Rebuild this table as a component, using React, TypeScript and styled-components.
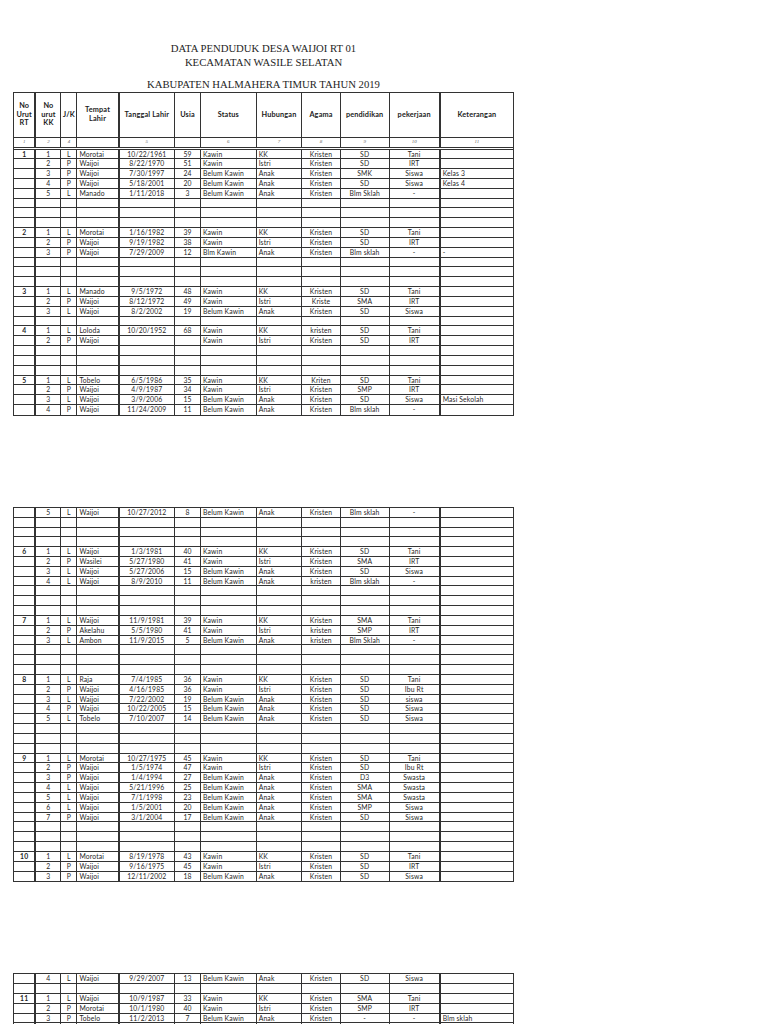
import React from "react";
import styled, { createGlobalStyle } from "styled-components";

const GlobalStyle = createGlobalStyle`
  html, body { margin: 0; padding: 0; background: #ffffff; }
  body { font-family: Lato, "Liberation Sans", sans-serif; color: #222; }
`;

const COLS = "22.4px 25px 16px 42.3px 55.3px 26px 55.7px 45.7px 38.3px 49px 51px 1fr";
const LINE = "#333333";

type Align = "left" | "center";
const ALIGN: Align[] = ["center", "center", "center", "left", "center", "center", "left", "left", "center", "center", "center", "left"];
const THICK = [true, false, false, true, false, false, false, false, false, false, true, false];

const Page = styled.div`
  width: 501px;
  padding: 41px 0 0 13px;
`;

const TitleLine = styled.div<{ $gap?: number }>`
  font-family: "Liberation Serif", "DejaVu Serif", serif;
  font-size: 10.7px;
  line-height: 14px;
  text-align: center;
  color: #1e1e1e;
  margin-top: ${(p) => p.$gap ?? 0}px;
`;

const Sheet = styled.div<{ $top: number }>`
  margin-top: ${(p) => p.$top}px;
  border: 1px solid ${LINE};
  box-sizing: border-box;
  width: 501px;
`;

const Row = styled.div`
  display: grid;
  grid-template-columns: ${COLS};
  height: 9.83px;
  box-sizing: border-box;
  border-bottom: 1px solid ${LINE};
  &:last-child { border-bottom: none; }
`;

const HeadRow = styled(Row)`
  height: 45px;
`;

const NumRow = styled(Row)`
  height: 11.5px;
  border-bottom: 3px double ${LINE};
`;

const Cell = styled.div<{ $align: Align; $thick: boolean; $bold?: boolean }>`
  box-sizing: border-box;
  border-right: ${(p) => (p.$thick ? 2 : 1)}px solid ${LINE};
  &:last-child { border-right: none; }
  padding: 0 2px;
  font-size: 6.8px;
  letter-spacing: 0.15px;
  line-height: 8.8px;
  white-space: nowrap;
  overflow: hidden;
  text-align: ${(p) => p.$align};
  font-weight: ${(p) => (p.$bold ? 700 : 400)};
  color: #1f1f1f;
`;

const HeadCell = styled.div<{ $thick: boolean }>`
  box-sizing: border-box;
  border-right: ${(p) => (p.$thick ? 2 : 1)}px solid ${LINE};
  &:last-child { border-right: none; }
  display: flex;
  align-items: center;
  justify-content: center;
  text-align: center;
  font-weight: 700;
  font-size: 7.3px;
  letter-spacing: 0.15px;
  line-height: 8.6px;
  color: #1c1c1c;
  white-space: pre-line;
  padding: 0 1px;
`;

const NumCell = styled.div<{ $thick: boolean }>`
  box-sizing: border-box;
  border-right: ${(p) => (p.$thick ? 2 : 1)}px solid ${LINE};
  &:last-child { border-right: none; }
  font-family: "Liberation Serif", serif;
  font-style: italic;
  font-size: 5px;
  line-height: 8px;
  text-align: center;
  color: #666;
`;

const HEAD = ["No\nUrut\nRT", "No\nurut\nKK", "J/K", "Tempat\nLahir", "Tanggal Lahir", "Usia", "Status", "Hubungan", "Agama", "pendidikan", "pekerjaan", "Keterangan"];
const NUMS = ["1", "2", "4", "", "5", "", "6", "7", "8", "9", "10", "11"];

type R = string[];
const E: R = [];
const empties = (n: number): R[] => Array.from({ length: n }, () => E);

const page1: R[] = [
  ["1", "1", "L", "Morotai", "10/22/1961", "59", "Kawin", "KK", "Kristen", "SD", "Tani", ""],
  ["", "2", "P", "Waijoi", "8/22/1970", "51", "Kawin", "Istri", "Kristen", "SD", "IRT", ""],
  ["", "3", "P", "Waijoi", "7/30/1997", "24", "Belum Kawin", "Anak", "Kristen", "SMK", "Siswa", "Kelas 3"],
  ["", "4", "P", "Waijoi", "5/18/2001", "20", "Belum Kawin", "Anak", "Kristen", "SD", "Siswa", "Kelas 4"],
  ["", "5", "L", "Manado", "1/11/2018", "3", "Belum Kawin", "Anak", "Kristen", "Blm Sklah", "-", ""],
  ...empties(3),
  ["2", "1", "L", "Morotai", "1/16/1982", "39", "Kawin", "KK", "Kristen", "SD", "Tani", ""],
  ["", "2", "P", "Waijoi", "9/19/1982", "38", "Kawin", "Istri", "Kristen", "SD", "IRT", ""],
  ["", "3", "P", "Waijoi", "7/29/2009", "12", "Blm Kawin", "Anak", "Kristen", "Blm sklah", "-", "-"],
  ...empties(3),
  ["3", "1", "L", "Manado", "9/5/1972", "48", "Kawin", "KK", "Kristen", "SD", "Tani", ""],
  ["", "2", "P", "Waijoi", "8/12/1972", "49", "Kawin", "Istri", "Kriste", "SMA", "IRT", ""],
  ["", "3", "L", "Waijoi", "8/2/2002", "19", "Belum Kawin", "Anak", "Kristen", "SD", "Siswa", ""],
  ...empties(1),
  ["4", "1", "L", "Loloda", "10/20/1952", "68", "Kawin", "KK", "kristen", "SD", "Tani", ""],
  ["", "2", "P", "Waijoi", "", "", "Kawin", "Istri", "Kristen", "SD", "IRT", ""],
  ...empties(3),
  ["5", "1", "L", "Tobelo", "6/5/1986", "35", "Kawin", "KK", "Kriten", "SD", "Tani", ""],
  ["", "2", "P", "Waijoi", "4/9/1987", "34", "Kawin", "Istri", "Kristen", "SMP", "IRT", ""],
  ["", "3", "L", "Waijoi", "3/9/2006", "15", "Belum Kawin", "Anak", "Kristen", "SD", "Siswa", "Masi Sekolah"],
  ["", "4", "P", "Waijoi", "11/24/2009", "11", "Belum Kawin", "Anak", "Kristen", "Blm sklah", "-", ""],
];

const page2: R[] = [
  ["", "5", "L", "Waijoi", "10/27/2012", "8", "Belum Kawin", "Anak", "Kristen", "Blm sklah", "-", ""],
  ...empties(3),
  ["6", "1", "L", "Waijoi", "1/3/1981", "40", "Kawin", "KK", "Kristen", "SD", "Tani", ""],
  ["", "2", "P", "Wasilei", "5/27/1980", "41", "Kawin", "Istri", "Kristen", "SMA", "IRT", ""],
  ["", "3", "L", "Waijoi", "5/27/2006", "15", "Belum Kawin", "Anak", "Kristen", "SD", "Siswa", ""],
  ["", "4", "L", "Waijoi", "8/9/2010", "11", "Belum Kawin", "Anak", "kristen", "Blm sklah", "-", ""],
  ...empties(3),
  ["7", "1", "L", "Waijoi", "11/9/1981", "39", "Kawin", "KK", "Kristen", "SMA", "Tani", ""],
  ["", "2", "P", "Akelahu", "5/5/1980", "41", "Kawin", "Istri", "kristen", "SMP", "IRT", ""],
  ["", "3", "L", "Ambon", "11/9/2015", "5", "Belum Kawin", "Anak", "kristen", "Blm Sklah", "-", ""],
  ...empties(3),
  ["8", "1", "L", "Raja", "7/4/1985", "36", "Kawin", "KK", "Kristen", "SD", "Tani", ""],
  ["", "2", "P", "Waijoi", "4/16/1985", "36", "Kawin", "Istri", "Kristen", "SD", "Ibu Rt", ""],
  ["", "3", "L", "Waijoi", "7/22/2002", "19", "Belum Kawin", "Anak", "Kristen", "SD", "siswa", ""],
  ["", "4", "P", "Waijoi", "10/22/2005", "15", "Belum Kawin", "Anak", "Kristen", "SD", "Siswa", ""],
  ["", "5", "L", "Tobelo", "7/10/2007", "14", "Belum Kawin", "Anak", "Kristen", "SD", "Siswa", ""],
  ...empties(3),
  ["9", "1", "L", "Morotai", "10/27/1975", "45", "Kawin", "KK", "Kristen", "SD", "Tani", ""],
  ["", "2", "P", "Waijoi", "1/5/1974", "47", "Kawin", "Istri", "Kristen", "SD", "Ibu Rt", ""],
  ["", "3", "P", "Waijoi", "1/4/1994", "27", "Belum Kawin", "Anak", "Kristen", "D3", "Swasta", ""],
  ["", "4", "L", "Waijoi", "5/21/1996", "25", "Belum Kawin", "Anak", "Kristen", "SMA", "Swasta", ""],
  ["", "5", "L", "Waijoi", "7/1/1998", "23", "Belum Kawin", "Anak", "Kristen", "SMA", "Swasta", ""],
  ["", "6", "L", "Waijoi", "1/5/2001", "20", "Belum Kawin", "Anak", "Kristen", "SMP", "Siswa", ""],
  ["", "7", "P", "Waijoi", "3/1/2004", "17", "Belum Kawin", "Anak", "Kristen", "SD", "Siswa", ""],
  ...empties(3),
  ["10", "1", "L", "Morotai", "8/19/1978", "43", "Kawin", "KK", "Kristen", "SD", "Tani", ""],
  ["", "2", "P", "Waijoi", "9/16/1975", "45", "Kawin", "Istri", "Kristen", "SD", "IRT", ""],
  ["", "3", "P", "Waijoi", "12/11/2002", "18", "Belum Kawin", "Anak", "Kristen", "SD", "Siswa", ""],
];

const page3: R[] = [
  ["", "4", "L", "Waijoi", "9/29/2007", "13", "Belum Kawin", "Anak", "Kristen", "SD", "Siswa", ""],
  ...empties(1),
  ["11", "1", "L", "Waijoi", "10/9/1987", "33", "Kawin", "KK", "Kristen", "SMA", "Tani", ""],
  ["", "2", "P", "Morotai", "10/1/1980", "40", "Kawin", "Istri", "Kristen", "SMP", "IRT", ""],
  ["", "3", "P", "Tobelo", "11/2/2013", "7", "Belum Kawin", "Anak", "Kristen", "-", "-", "Blm sklah"],
  ...empties(2),
];

const DataRow: React.FC<{ cells: R }> = ({ cells }) => (
  <Row>
    {ALIGN.map((a, i) => (
      <Cell key={i} $align={a} $thick={THICK[i]} $bold={i === 0}>
        {cells[i] ?? ""}
      </Cell>
    ))}
  </Row>
);

const Rows: React.FC<{ rows: R[] }> = ({ rows }) => (
  <>
    {rows.map((r, i) => (
      <DataRow key={i} cells={r} />
    ))}
  </>
);

export default function App() {
  return (
    <>
      <GlobalStyle />
      <Page>
        <TitleLine>DATA PENDUDUK DESA WAIJOI RT 01</TitleLine>
        <TitleLine>KECAMATAN WASILE SELATAN</TitleLine>
        <TitleLine $gap={8}>KABUPATEN HALMAHERA TIMUR TAHUN 2019</TitleLine>
        <Sheet $top={1}>
          <HeadRow>
            {HEAD.map((h, i) => (
              <HeadCell key={i} $thick={THICK[i]}>
                {h}
              </HeadCell>
            ))}
          </HeadRow>
          <NumRow>
            {NUMS.map((n, i) => (
              <NumCell key={i} $thick={THICK[i]}>
                {n}
              </NumCell>
            ))}
          </NumRow>
          <Rows rows={page1} />
        </Sheet>
        <Sheet $top={91}>
          <Rows rows={page2} />
        </Sheet>
        <Sheet $top={91}>
          <Rows rows={page3} />
        </Sheet>
      </Page>
    </>
  );
}
